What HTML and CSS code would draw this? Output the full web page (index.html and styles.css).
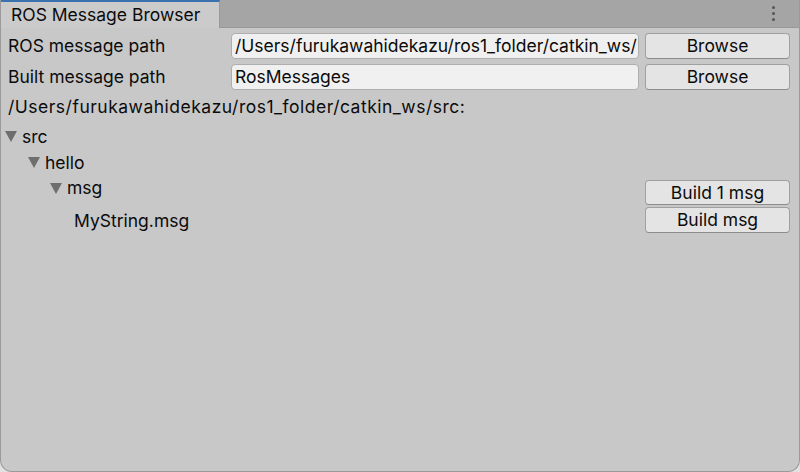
FILE: index.html
```html
<!DOCTYPE html>
<html>
<head>
<meta charset="utf-8">
<link rel="stylesheet" href="styles.css">
</head>
<body>
<div class="window">
  <div class="tabbar">
    <div class="tab">ROS Message Browser</div>
    <div class="menu"><span></span><span></span><span></span></div>
  </div>
  <div class="content">
    <div class="row">
      <div class="label">ROS message path</div>
      <div class="field">/Users/furukawahidekazu/ros1_folder/catkin_ws/</div>
      <div class="btn">Browse</div>
    </div>
    <div class="row">
      <div class="label">Built message path</div>
      <div class="field">RosMessages</div>
      <div class="btn">Browse</div>
    </div>
    <div class="path">/Users/furukawahidekazu/ros1_folder/catkin_ws/src:</div>
    <div class="tree">
      <div class="node lvl0"><span class="tri"></span>src</div>
      <div class="node lvl1"><span class="tri"></span>hello</div>
      <div class="node lvl2 btnrow"><span class="tri"></span><span class="nodetext">msg</span><div class="spacer"></div><div class="btn small">Build 1 msg</div></div>
      <div class="node lvl3"><span class="nodetext">MyString.msg</span><div class="spacer"></div><div class="btn">Build msg</div></div>
    </div>
  </div>
</div>
</body>
</html>
```
FILE: styles.css
```css
html, body {
  margin: 0;
  padding: 0;
  width: 800px;
  height: 472px;
  background: #e2e2e2;
  overflow: hidden;
}
body {
  font-family: Inter, "Noto Sans", sans-serif;
  font-size: 17.5px;
  color: #0b0b0b;
}
.window {
  width: 800px;
  height: 472px;
  box-sizing: border-box;
  background: #c8c8c8;
  border-left: 1px solid #9a9a9a;
  border-right: 1px solid #9a9a9a;
  border-bottom: 1px solid #9a9a9a;
  border-radius: 0 0 12px 12px;
  overflow: hidden;
  display: flex;
  flex-direction: column;
}
.tabbar {
  height: 27px;
  background: #a5a5a5;
  border-bottom: 1px solid #999;
  display: flex;
  align-items: stretch;
  flex: none;
}
.tab {
  width: 219px;
  background: #cbcbcb;
  border-top: 2px solid #3a72b0;
  border-right: 1px solid #999;
  padding-left: 10px;
  box-sizing: border-box;
  line-height: 25px;
  margin-bottom: -1px;
}
.menu {
  margin-left: auto;
  width: 12px;
  margin-right: 20px;
  display: flex;
  flex-direction: column;
  align-items: center;
  justify-content: center;
  gap: 3px;
}
.menu span {
  width: 3px;
  height: 3px;
  border-radius: 50%;
  background: #555;
}
.content {
  padding: 4px 9px 0 6px;
}
.row {
  display: flex;
  align-items: center;
  height: 27px;
  margin-bottom: 4px;
}
.label {
  width: 223px;
  padding-left: 1px;
  flex: none;
  white-space: nowrap;
}
.field {
  width: 408px;
  height: 26px;
  box-sizing: border-box;
  background: #f0f0f0;
  border: 1px solid #aeaeae;
  border-radius: 4px;
  padding-left: 3px;
  line-height: 24px;
  overflow: hidden;
  white-space: nowrap;
  flex: none;
}
.btn {
  width: 145px;
  height: 26px;
  box-sizing: border-box;
  margin-left: auto;
  background: #e4e4e4;
  border: 1px solid #a0a0a0;
  border-bottom-color: #8c8c8c;
  border-radius: 4px;
  text-align: center;
  line-height: 24px;
  flex: none;
}
.path {
  margin-top: 2px;
  height: 26px;
  line-height: 26px;
  padding-left: 1px;
  white-space: nowrap;
  letter-spacing: 0.5px;
}
.tree {
  margin-top: 3px;
  margin-left: -2px;
}
.node {
  display: flex;
  align-items: center;
  height: 26px;
}
.lvl0 { padding-left: 0; }
.lvl1 { padding-left: 23px; }
.lvl2 { padding-left: 45px; }
.lvl3 { padding-left: 69px; margin-top: 2px; }
.btnrow {
  align-items: flex-start;
  height: 30px;
}
.btnrow .tri { margin-top: 8px; }
.btnrow .nodetext { line-height: 26px; }
.btnrow .btn { margin-top: 5px; }
.tri {
  width: 0;
  height: 0;
  border-left: 6px solid transparent;
  border-right: 6px solid transparent;
  border-top: 11px solid #6e6e6e;
  margin-right: 5px;
  margin-top: 1px;
  flex: none;
}
.spacer { flex: 1; }
.btn.small {
  height: 25px;
  line-height: 23px;
}
```
